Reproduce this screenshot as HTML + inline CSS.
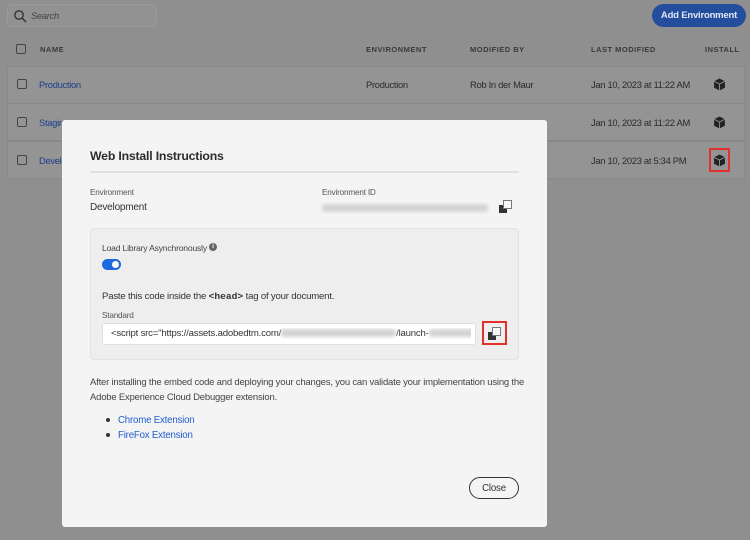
<!DOCTYPE html>
<html><head><meta charset="utf-8"><style>
*{margin:0;padding:0;box-sizing:border-box}
body{width:750px;height:540px;overflow:hidden;background:#8f8f8f;font-family:"Liberation Sans",sans-serif;position:relative;color:#2c2c2c;letter-spacing:-0.2px}
.a{position:absolute;white-space:nowrap}
.hdr{font-size:7.5px;letter-spacing:.5px;color:#3a3a3a;font-weight:bold;top:45px}
.row{position:absolute;left:7px;width:738px;height:38px;background:#949494;border:1px solid #888}
.cb{position:absolute;width:10px;height:10px;border:1.5px solid #444;border-radius:2px}
.t{font-size:9.4px;color:#2a2a2a;letter-spacing:-0.3px}
.lnk{color:#1d3f8a}
.blur{background:#d4d4d4;filter:blur(1.5px);height:8px;border-radius:3px}
.ib{display:inline-block;vertical-align:middle;background:#d4d4d4;filter:blur(1.5px);height:8px;border-radius:3px}
.copy .b{position:absolute;left:0;top:5px;width:8px;height:8px;background:#333}
.copy .f{position:absolute;left:4px;top:0;width:9px;height:9px;border:1px solid #777;background:#f8f8f8}
</style></head><body>
<div class="a" style="left:7px;top:4px;width:150px;height:23px;border:1px solid #999;border-radius:4px;background:#929292"></div>
<svg class="a" style="left:13px;top:9px" width="14" height="14" viewBox="0 0 14 14"><circle cx="6" cy="6" r="4.2" fill="none" stroke="#333" stroke-width="1.4"/><path d="M9 9l4 4" stroke="#333" stroke-width="1.5"/></svg>
<div class="a t" style="left:31px;top:10px;font-style:italic;color:#444">Search</div>
<div class="a" style="left:652px;top:4px;width:94px;height:23px;border-radius:12px;background:#254d9e;color:#dfe6f5;font-size:9.5px;font-weight:bold;text-align:center;line-height:23px">Add Environment</div>
<div class="cb" style="left:16px;top:44px"></div>
<div class="a hdr" style="left:40px">NAME</div>
<div class="a hdr" style="left:366px">ENVIRONMENT</div>
<div class="a hdr" style="left:470px">MODIFIED BY</div>
<div class="a hdr" style="left:591px">LAST MODIFIED</div>
<div class="a hdr" style="left:705px">INSTALL</div>

<div class="row" style="top:66px"></div>
<div class="row" style="top:103px"></div>
<div class="row" style="top:141px"></div>
<div class="cb" style="left:17px;top:79px"></div>
<div class="cb" style="left:17px;top:117px"></div>
<div class="cb" style="left:17px;top:155px"></div>
<div class="a t lnk" style="left:39px;top:79px">Production</div>
<div class="a t lnk" style="left:39px;top:117px">Staging</div>
<div class="a t lnk" style="left:39px;top:155px">Development</div>
<div class="a t" style="left:366px;top:79px">Production</div>
<div class="a t" style="left:470px;top:79px">Rob In der Maur</div>
<div class="a t" style="left:591px;top:79px">Jan 10, 2023 at 11:22 AM</div>
<div class="a t" style="left:591px;top:117px">Jan 10, 2023 at 11:22 AM</div>
<div class="a t" style="left:591px;top:155px">Jan 10, 2023 at 5:34 PM</div>
<svg class="a" style="left:713px;top:78px" width="13" height="13" viewBox="0 0 12 12"><path d="M6 .5L11 3v6L6 11.5 1 9V3z" fill="#222"/><path d="M1 3l5 2.5L11 3M6 5.5v6" stroke="#999" stroke-width=".8" fill="none"/></svg>
<svg class="a" style="left:713px;top:116px" width="13" height="13" viewBox="0 0 12 12"><path d="M6 .5L11 3v6L6 11.5 1 9V3z" fill="#222"/><path d="M1 3l5 2.5L11 3M6 5.5v6" stroke="#999" stroke-width=".8" fill="none"/></svg>
<svg class="a" style="left:713px;top:154px" width="13" height="13" viewBox="0 0 12 12"><path d="M6 .5L11 3v6L6 11.5 1 9V3z" fill="#222"/><path d="M1 3l5 2.5L11 3M6 5.5v6" stroke="#999" stroke-width=".8" fill="none"/></svg>
<div class="a" style="left:709px;top:148px;width:21px;height:24px;border:2px solid #e2302d"></div>

<div class="a" style="left:62px;top:120px;width:485px;height:407px;background:#f4f4f4;border-radius:3px"></div>
<div class="a" style="left:90px;top:149px;font-size:12.3px;font-weight:bold;color:#2c2c2c">Web Install Instructions</div>
<div class="a" style="left:90px;top:171px;width:429px;height:2px;background:#e0e0e0"></div>
<div class="a" style="left:90px;top:188px;font-size:8.2px;color:#555">Environment</div>
<div class="a" style="left:90px;top:202px;font-size:10px;color:#333">Development</div>
<div class="a" style="left:322px;top:188px;font-size:8.2px;color:#555">Environment ID</div>
<div class="a blur" style="left:322px;top:204px;width:166px"></div>
<div class="a copy" style="left:499px;top:200px;width:14px;height:14px"><div class="b"></div><div class="f"></div></div>

<div class="a" style="left:90px;top:228px;width:429px;height:132px;background:#eeeeee;border:1px solid #e2e2e2;border-radius:4px"></div>
<div class="a" style="left:102px;top:243px;font-size:8.6px;color:#444">Load Library Asynchronously</div>
<div class="a" style="left:209px;top:243px;width:8px;height:8px;border-radius:50%;background:#666;color:#fff;font-size:6px;text-align:center;line-height:8px;font-weight:bold">i</div>
<div class="a" style="left:102px;top:259px;width:19px;height:11px;border-radius:6px;background:#1d6ae0"></div>
<div class="a" style="left:112px;top:261px;width:7px;height:7px;border-radius:50%;background:#fff"></div>
<div class="a" style="left:102px;top:291px;font-size:9.6px;color:#333">Paste this code inside the <b style="font-family:'Liberation Mono',monospace;letter-spacing:0">&lt;head&gt;</b> tag of your document.</div>
<div class="a" style="left:102px;top:311px;font-size:8.2px;color:#555">Standard</div>
<div class="a" style="left:102px;top:323px;width:374px;height:22px;background:#fff;border:1px solid #e0e0e0;border-radius:3px"></div>
<div class="a" style="left:111px;top:328px;font-size:9.6px;color:#333;width:360px;overflow:hidden">&lt;script src="https://assets.adobedtm.com/<span class="ib" style="width:115px"></span>/launch-<span class="ib" style="width:50px"></span></div>
<div class="a" style="left:482px;top:321px;width:25px;height:24px;border:2px solid #e2302d"></div>
<div class="a copy" style="left:488px;top:327px;width:14px;height:14px"><div class="b"></div><div class="f"></div></div>

<div class="a" style="left:90px;top:376px;width:440px;font-size:9.5px;line-height:14.5px;color:#444;white-space:normal">After installing the embed code and deploying your changes, you can validate your implementation using the Adobe Experience Cloud Debugger extension.</div>
<div class="a" style="left:106px;top:418px;width:4px;height:4px;border-radius:50%;background:#333"></div>
<div class="a" style="left:106px;top:433px;width:4px;height:4px;border-radius:50%;background:#333"></div>
<div class="a" style="left:118px;top:415px;font-size:9.7px;color:#1f5ecf">Chrome Extension</div>
<div class="a" style="left:118px;top:430px;font-size:9.7px;color:#1f5ecf">FireFox Extension</div>
<div class="a" style="left:469px;top:477px;width:50px;height:22px;border:1.7px solid #333;border-radius:11px;font-size:9.7px;color:#333;display:flex;align-items:center;justify-content:center">Close</div>
</body></html>
